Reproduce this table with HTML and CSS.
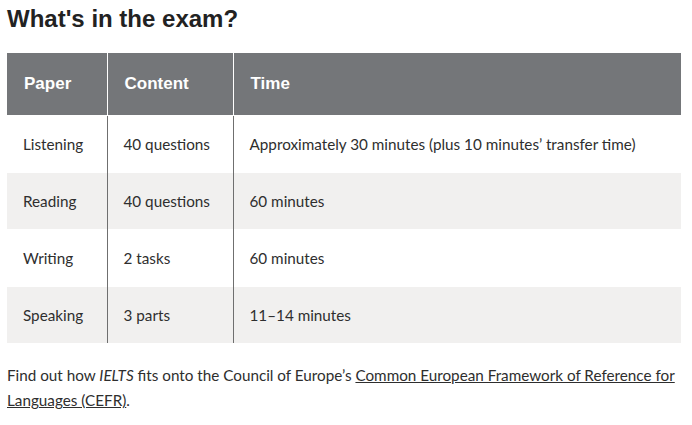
FILE: index.html
```html
<!DOCTYPE html>
<html lang="en">
<head>
<meta charset="utf-8">
<title>What's in the exam?</title>
<link rel="stylesheet" href="styles.css">
</head>
<body>
<main class="section">
  <h2 class="title">What's in the exam?</h2>
  <table class="exam">
    <colgroup>
      <col class="c1"><col class="c2"><col class="c3">
    </colgroup>
    <thead>
      <tr><th>Paper</th><th>Content</th><th>Time</th></tr>
    </thead>
    <tbody>
      <tr><td>Listening</td><td>40 questions</td><td>Approximately 30 minutes (plus 10 minutes’ transfer time)</td></tr>
      <tr><td>Reading</td><td>40 questions</td><td>60 minutes</td></tr>
      <tr><td>Writing</td><td>2 tasks</td><td>60 minutes</td></tr>
      <tr><td>Speaking</td><td>3 parts</td><td>11–14 minutes</td></tr>
    </tbody>
  </table>
  <p class="note">Find out how <em>IELTS</em> fits onto the Council of Europe’s <a href="#">Common European Framework of Reference for Languages (CEFR)</a>.</p>
</main>
</body>
</html>
```
FILE: styles.css
```css
html, body {
  margin: 0;
  padding: 0;
  background: #fff;
}
.section {
  padding: 0 11px 0 7px;
  font-family: Lato, "Open Sans", sans-serif;
  color: #2e2e2e;
}
.title {
  font-family: "Liberation Sans", Arial, sans-serif;
  font-weight: bold;
  font-size: 24px;
  line-height: 28px;
  color: #222;
  margin: 0;
  padding-top: 5px;
  height: 53px;
  box-sizing: border-box;
}
.exam {
  width: 100%;
  border-collapse: collapse;
  table-layout: fixed;
}
.c1 { width: 100px; }
.c2 { width: 126px; }
.exam th {
  background: #747679;
  color: #fff;
  font-family: "Liberation Sans", Arial, sans-serif;
  font-weight: bold;
  font-size: 17px;
  text-align: left;
  height: 62px;
  padding: 0 17px;
  box-sizing: border-box;
  border-left: 1px solid #fff;
}
.exam th:first-child { border-left: none; }
.exam td {
  font-size: 15.25px;
  height: 57px;
  padding: 0 16px;
  box-sizing: border-box;
  border-left: 1px solid #6f6f6f;
  border-top: 1px solid #fff;
  vertical-align: middle;
}
.exam td:first-child { border-left: none; }
.exam tbody tr:nth-child(even) td { background: #f1f0ef; }
.note {
  font-size: 15.25px;
  line-height: 25px;
  margin: 20px 0 0;
}
.note a { color: #2e2e2e; text-decoration: underline; }
```
